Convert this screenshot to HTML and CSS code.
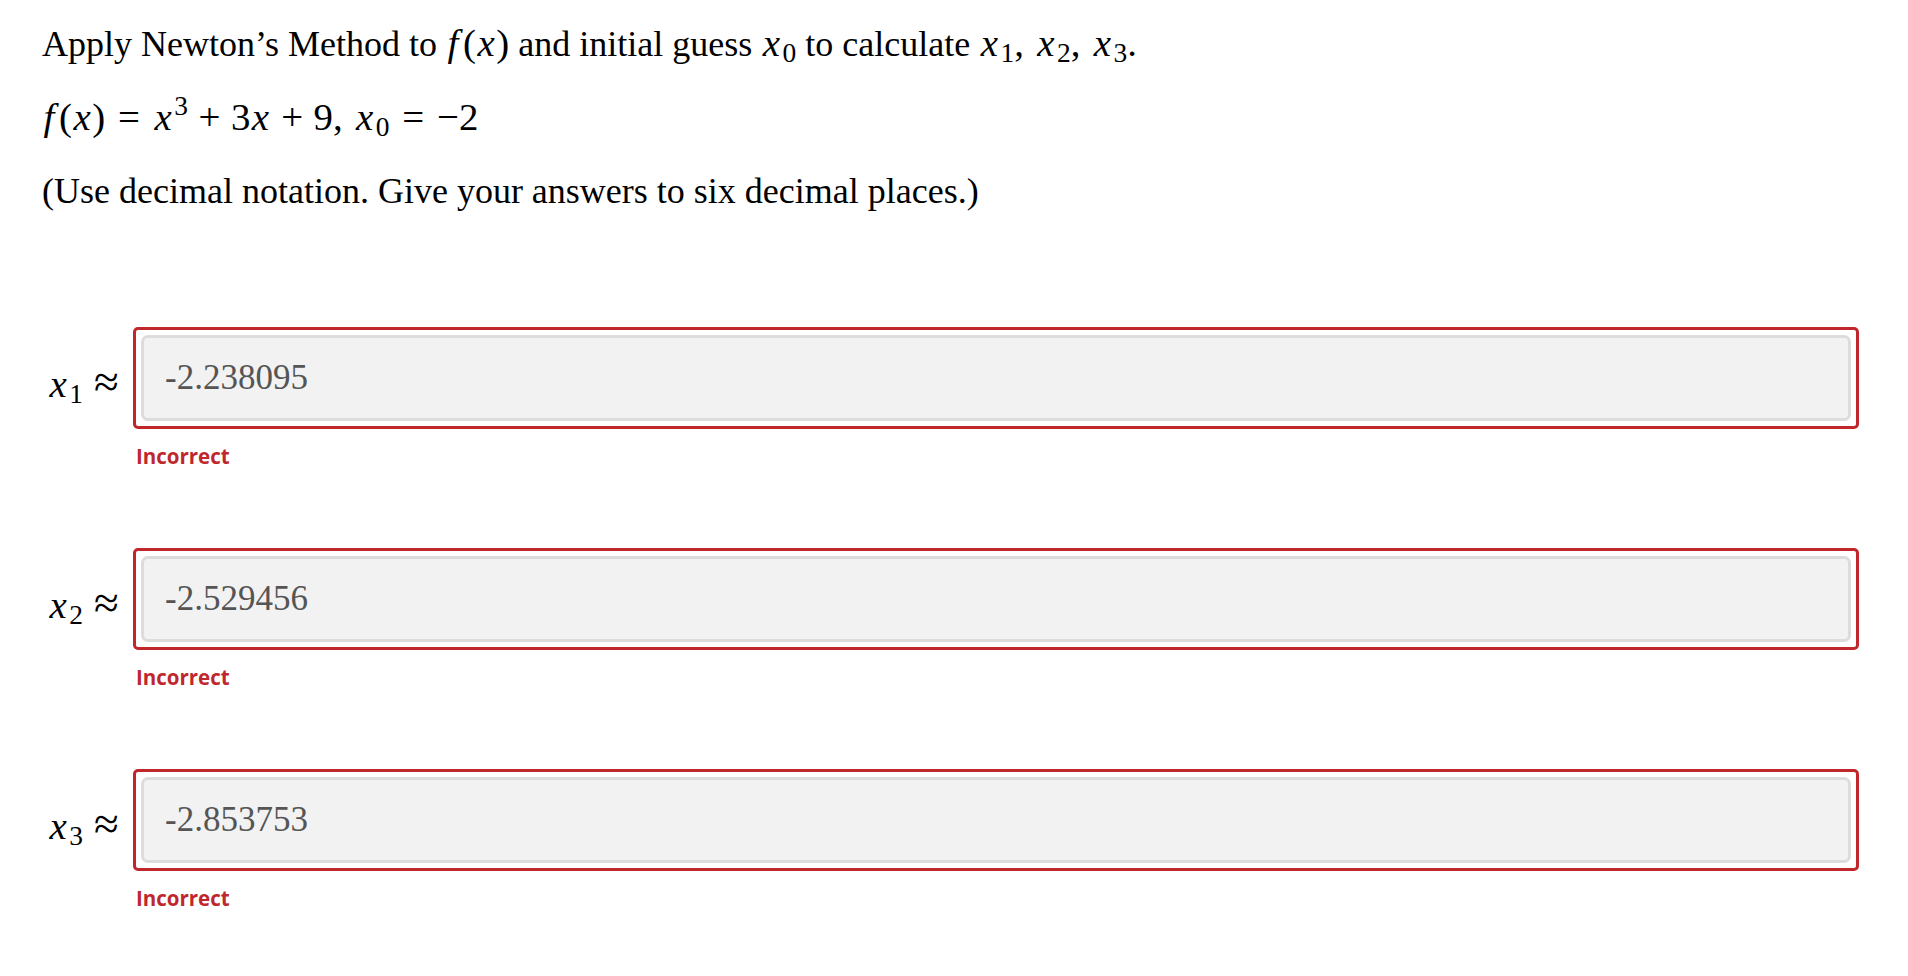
FILE: index.html
```html
<!DOCTYPE html>
<html lang="en">
<head>
    <meta charset="UTF-8">
    <meta name="viewport" content="width=device-width, initial-scale=1.0">
    <title>Newton's Method</title>
    <link rel="stylesheet" href="styles.css">
</head>
<body>
    <div class="question">
        <p class="prompt">Apply Newton’s Method to <span class="math"><i class="f">f</i>(<i>x</i>)</span> and initial guess <span class="math"><i>x</i><sub>0</sub></span> to calculate <span class="math"><i>x</i><sub>1</sub>,<span class="sep"></span><i>x</i><sub>2</sub>,<span class="sep"></span><i>x</i><sub>3</sub>.</span></p>
        <p class="prompt"><span class="math"><i class="f">f</i>(<i>x</i>)<span class="rel">=</span><i>x</i><sup>3</sup><span class="op">+</span>3<i>x</i><span class="op">+</span>9,<span class="sep"></span><i>x</i><sub>0</sub><span class="rel">=</span>−2</span></p>
        <p class="prompt">(Use decimal notation. Give your answers to six decimal places.)</p>
    </div>

    <div class="answers">
        <div class="answer">
            <div class="answer-row">
                <label class="var" for="x1"><i>x</i><sub>1</sub><span class="approx">≈</span></label>
                <div class="field incorrect">
                    <input id="x1" type="text" value="-2.238095" readonly>
                </div>
            </div>
            <div class="feedback">Incorrect</div>
        </div>

        <div class="answer">
            <div class="answer-row">
                <label class="var" for="x2"><i>x</i><sub>2</sub><span class="approx">≈</span></label>
                <div class="field incorrect">
                    <input id="x2" type="text" value="-2.529456" readonly>
                </div>
            </div>
            <div class="feedback">Incorrect</div>
        </div>

        <div class="answer">
            <div class="answer-row">
                <label class="var" for="x3"><i>x</i><sub>3</sub><span class="approx">≈</span></label>
                <div class="field incorrect">
                    <input id="x3" type="text" value="-2.853753" readonly>
                </div>
            </div>
            <div class="feedback">Incorrect</div>
        </div>
    </div>
</body>
</html>
```

FILE: styles.css
```css
body {
    font-family: "Liberation Serif", "Times New Roman", serif;
    font-size: 36px;
    color: #000;
    margin: 0;
    padding: 0;
    background: #fff;
}
.question {
    padding: 22px 49px 0 42px;
}
.prompt {
    margin: 0 0 31px;
    line-height: 42px;
}

/* inline math */
.math {
    font-family: "Liberation Serif", "Times New Roman", serif;
    font-size: 1.08em;
    white-space: nowrap;
}
.math i,
.var i {
    font-style: italic;
    padding: 0 0.04em;
}
.math i.f {
    margin-right: 0.08em;
}
.math sub,
.var sub {
    font-size: 0.707em;
    vertical-align: -0.22em;
    line-height: 0;
    margin-left: 1px;
}
.math sup {
    font-size: 0.707em;
    vertical-align: 0.55em;
    line-height: 0;
    margin-left: 1px;
}
.rel {
    margin: 0 0.33em;
}
.op {
    margin: 0 0.27em;
}
.sep {
    margin-right: 0.3em;
}

/* answers */
.answers {
    padding: 84px 49px 40px 42px;
}
.answer {
    margin-bottom: 78px;
}
.answer-row {
    display: flex;
    align-items: center;
}
.var {
    width: 91px;
    flex-shrink: 0;
    padding-left: 6px;
    padding-top: 10px;
    box-sizing: border-box;
    white-space: nowrap;
    font-family: "Liberation Serif", "Times New Roman", serif;
    font-size: 1.08em;
}
.approx {
    margin-left: 0.24em;
    font-size: 1.16em;
    line-height: 0;
}
.field {
    flex: 1;
    padding: 5px;
    border-radius: 5px;
}
.field.incorrect {
    border: 3px solid #c0272d;
}
.field input {
    display: block;
    width: 100%;
    box-sizing: border-box;
    height: 86px;
    border: 3px solid #dcdcdc;
    border-radius: 7px;
    background: #f2f2f2;
    padding: 0 21px;
    font-family: "Liberation Serif", "Times New Roman", serif;
    font-size: 35px;
    color: #555;
    outline: none;
}
.feedback {
    margin-top: 14px;
    padding-left: 94px;
    font-family: "Open Sans", "Liberation Sans", sans-serif;
    font-weight: 700;
    font-size: 20.5px;
    line-height: 27px;
    color: #c0272d;
}
```
